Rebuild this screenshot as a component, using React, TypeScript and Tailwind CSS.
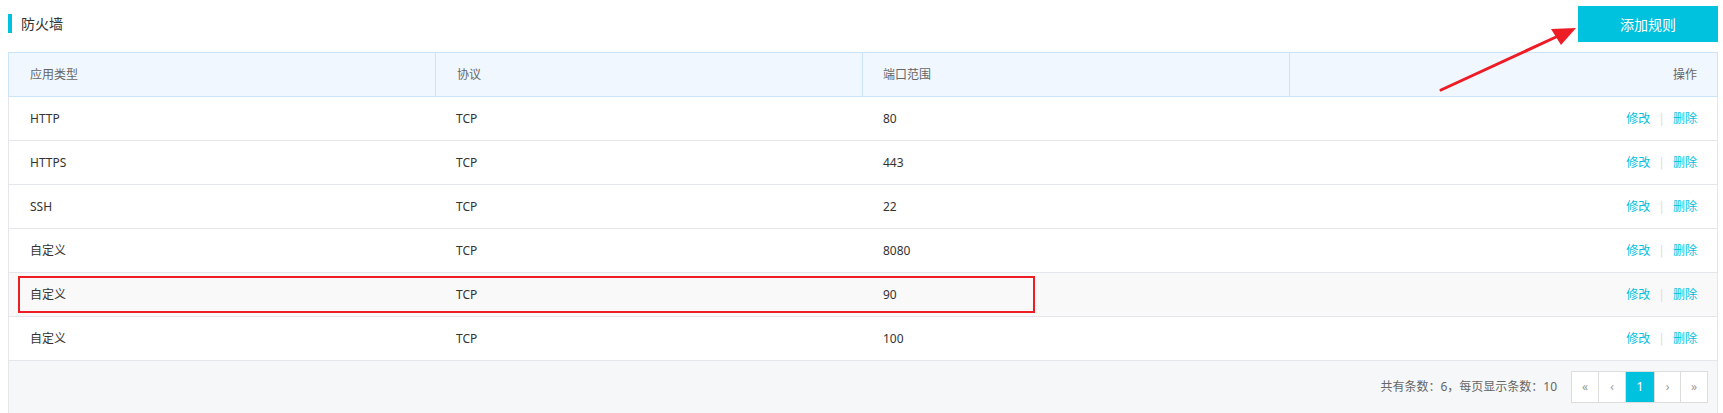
import React from "react";

const rows = [
  { type: "HTTP", proto: "TCP", port: "80" },
  { type: "HTTPS", proto: "TCP", port: "443" },
  { type: "SSH", proto: "TCP", port: "22" },
  { type: "自定义", proto: "TCP", port: "8080" },
  { type: "自定义", proto: "TCP", port: "90" },
  { type: "自定义", proto: "TCP", port: "100" },
];

export default function App() {
  return (
    <div
      className="relative w-[1723px] h-[413px] bg-white overflow-hidden text-[12px] text-[#333]"
      style={{ fontFamily: '"Noto Sans", "Noto Sans CJK SC", sans-serif' }}
    >
      {/* Title row */}
      <div className="flex items-start justify-between pl-[8px] pr-[5px] pt-[6px] h-[52px]">
        <div className="flex items-center mt-[8px] h-[19px]">
          <div className="w-[4px] h-[19px] bg-[#00c1de]" />
          <span className="ml-[9px] text-[14px] text-[#333] leading-none">防火墙</span>
        </div>
        <button className="w-[140px] h-[36px] bg-[#00c1de] text-white text-[14px] flex items-center justify-center">
          添加规则
        </button>
      </div>

      {/* Table */}
      <div className="ml-[8px] w-[1710px] border-l border-r border-[#e3e6ea]">
        <div className="grid grid-cols-4 h-[45px] bg-[#f0f7ff] border-t border-b border-[#cce4fa] -ml-px -mr-px border-l border-r text-[#666]">
          <div className="flex items-center pl-[21px] border-r border-[#cce4fa]">应用类型</div>
          <div className="flex items-center pl-[21px] border-r border-[#cce4fa]">协议</div>
          <div className="flex items-center pl-[20px] border-r border-[#cce4fa]">端口范围</div>
          <div className="flex items-center justify-end pr-[20px]">操作</div>
        </div>
        {rows.map((r, i) => (
          <div
            key={i}
            className={`relative grid grid-cols-4 h-[44px] border-b border-[#e3e6ea] ${i === 4 ? "bg-[#f9f9f9]" : "bg-white"}`}
          >
            <div className="flex items-center pl-[21px]">{r.type}</div>
            <div className="flex items-center pl-[20px]">{r.proto}</div>
            <div className="flex items-center pl-[20px]">{r.port}</div>
            <div className="flex items-center justify-end pr-[20px] text-[#00c1de]">
              <span>修改</span>
              <span className="mx-[8px] text-[#ddd]">|</span>
              <span>删除</span>
            </div>
            {i === 4 && (
              <div className="absolute left-[9px] top-[3px] w-[1017px] h-[37px] border-2 border-[#ee1c25]" />
            )}
          </div>
        ))}
        <div className="flex items-center justify-end h-[60px] bg-[#f6f7f9] pr-[9px] pb-[8px] text-[#666]">
          <span className="mr-[14px]">共有条数：6，每页显示条数：10</span>
          <div className="flex h-[32px] border border-[#ddd] bg-white">
            <div className="w-[27px] flex items-center justify-center text-[#999] border-r border-[#ddd]">«</div>
            <div className="w-[27px] flex items-center justify-center text-[#999] border-r border-[#ddd]">‹</div>
            <div className="w-[28px] flex items-center justify-center text-white bg-[#00c1de] text-[13px]">1</div>
            <div className="w-[27px] flex items-center justify-center text-[#999] border-r border-l border-[#ddd]">›</div>
            <div className="w-[26px] flex items-center justify-center text-[#999]">»</div>
          </div>
        </div>
      </div>

      {/* Red arrow annotation */}
      <svg className="absolute left-0 top-0" width="1723" height="413" viewBox="0 0 1723 413">
        <line x1="1441" y1="90" x2="1556" y2="37" stroke="#ee1c25" strokeWidth="3" strokeLinecap="round" />
        <polygon points="1576,28 1551,29 1561,45" fill="#ee1c25" />
      </svg>
    </div>
  );
}
